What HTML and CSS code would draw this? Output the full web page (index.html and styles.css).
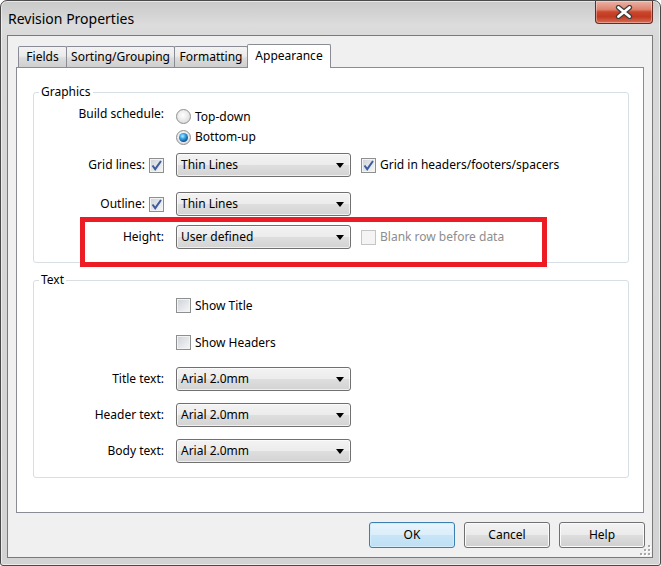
FILE: index.html
```html
<!DOCTYPE html>
<html lang="en">
<head>
<meta charset="utf-8">
<title>Revision Properties</title>
<link rel="stylesheet" href="styles.css">
</head>
<body>
<div class="window">
  <div class="titlebar">
    <span class="title">Revision Properties</span>
    <div class="close">
      <svg width="18" height="14" viewBox="0 0 18 14"><path d="M3.5 2.5 L14.5 11.5 M14.5 2.5 L3.5 11.5" stroke="#3d3d3d" stroke-width="5.2" stroke-linecap="round" fill="none"/><path d="M3.5 2.5 L14.5 11.5 M14.5 2.5 L3.5 11.5" stroke="#ffffff" stroke-width="2.8" stroke-linecap="round" fill="none"/></svg>
    </div>
  </div>
  <div class="client">
    <div class="tabs">
      <div class="tab t-fields">Fields</div>
      <div class="tab t-sort">Sorting/Grouping</div>
      <div class="tab t-format">Formatting</div>
      <div class="tab active t-appear">Appearance</div>
    </div>
    <div class="panel">
      <div class="group gfx">
        <span class="legend">Graphics</span>
        <div class="row r-radio1">
          <div class="lbl top">Build schedule:</div>
          <div class="opt"><span class="radio"></span>Top-down</div>
        </div>
        <div class="row r-radio2">
          <div class="lbl"></div>
          <div class="opt"><span class="radio on"></span>Bottom-up</div>
        </div>
        <div class="row r-grid">
          <div class="lbl">Grid lines:<span class="check"><svg width="13" height="13" viewBox="0 0 13 13"><path d="M2.5 6.5 L5.2 10.2 L11 2" fill="none" stroke="#3f5c9f" stroke-width="2"/></svg></span></div>
          <div class="combo">Thin Lines<span class="arrow"></span></div>
          <div class="opt side"><span class="check"><svg width="13" height="13" viewBox="0 0 13 13"><path d="M2.5 6.5 L5.2 10.2 L11 2" fill="none" stroke="#3f5c9f" stroke-width="2"/></svg></span>Grid in headers/footers/spacers</div>
        </div>
        <div class="row r-outline">
          <div class="lbl">Outline:<span class="check"><svg width="13" height="13" viewBox="0 0 13 13"><path d="M2.5 6.5 L5.2 10.2 L11 2" fill="none" stroke="#3f5c9f" stroke-width="2"/></svg></span></div>
          <div class="combo">Thin Lines<span class="arrow"></span></div>
        </div>
        <div class="row r-height">
          <div class="lbl">Height:</div>
          <div class="combo">User defined<span class="arrow"></span></div>
          <div class="opt side disabled"><span class="check dis"></span>Blank row before data</div>
        </div>
      </div>
      <div class="group txt">
        <span class="legend">Text</span>
        <div class="row r-show1">
          <div class="lbl"></div>
          <div class="opt"><span class="check"></span>Show Title</div>
        </div>
        <div class="row r-show2">
          <div class="lbl"></div>
          <div class="opt"><span class="check"></span>Show Headers</div>
        </div>
        <div class="row r-title">
          <div class="lbl">Title text:</div>
          <div class="combo">Arial 2.0mm<span class="arrow"></span></div>
        </div>
        <div class="row r-header">
          <div class="lbl">Header text:</div>
          <div class="combo">Arial 2.0mm<span class="arrow"></span></div>
        </div>
        <div class="row r-body">
          <div class="lbl">Body text:</div>
          <div class="combo">Arial 2.0mm<span class="arrow"></span></div>
        </div>
      </div>
    </div>
    <div class="buttons">
      <div class="btn default">OK</div>
      <div class="btn">Cancel</div>
      <div class="btn">Help</div>
    </div>
    <div class="grip">
      <svg width="12" height="12" viewBox="0 0 12 12">
        <g fill="#ffffff"><rect x="10" y="2" width="2" height="2"/><rect x="10" y="6" width="2" height="2"/><rect x="6" y="6" width="2" height="2"/><rect x="10" y="10" width="2" height="2"/><rect x="6" y="10" width="2" height="2"/><rect x="2" y="10" width="2" height="2"/></g>
        <g fill="#a8a8a8"><rect x="9" y="1" width="2" height="2"/><rect x="9" y="5" width="2" height="2"/><rect x="5" y="5" width="2" height="2"/><rect x="9" y="9" width="2" height="2"/><rect x="5" y="9" width="2" height="2"/><rect x="1" y="9" width="2" height="2"/></g>
      </svg>
    </div>
  </div>
  <div class="annot"></div>
</div>
</body>
</html>
```

FILE: styles.css
```css
* { box-sizing: border-box; }
html, body { margin: 0; padding: 0; background: #ffffff; }
body {
  font-family: "Noto Sans", "DejaVu Sans", sans-serif;
  font-size: 12px;
  line-height: 16px;
  color: #000;
}
.window {
  width: 661px;
  height: 566px;
  border: 1px solid #4a4a4a;
  border-radius: 7px 7px 3px 3px;
  background: linear-gradient(#c9c9c9 0, #dcdcdc 24px, #d8d8d8 40px, #d3d3d3 100%);
  box-shadow: inset 0 0 0 1px rgba(255,255,255,0.55);
  position: relative;
  display: flex;
  flex-direction: column;
}
.titlebar {
  height: 34px;
  display: flex;
  justify-content: space-between;
  align-items: flex-start;
  padding-left: 7px;
}
.title {
  font-size: 14px;
  line-height: 18px;
  margin-top: 9px;
  color: #000;
}
.close {
  width: 58px;
  height: 23px;
  margin-right: 7px;
  border: 1px solid #6b2a21;
  border-top: none;
  border-radius: 0 0 4px 4px;
  background: linear-gradient(#ebb3a6 0, #de8570 38%, #c9462c 50%, #c13a21 72%, #d96f55 100%);
  box-shadow: inset 0 0 0 1px rgba(255,255,255,0.35);
  display: flex;
  align-items: center;
  justify-content: center;
}
.client {
  margin-left: 6px;
  width: 646px;
  height: 523px;
  border: 1px solid #7a7a7a;
  background: #f0f0f0;
  position: relative;
  display: flex;
  flex-direction: column;
}
.tabs {
  display: flex;
  align-items: flex-end;
  height: 23px;
  margin: 8px 8px 0;
  padding-left: 2px;
  position: relative;
  z-index: 1;
}
.tab {
  height: 21px;
  border: 1px solid #898c95;
  border-bottom: none;
  border-radius: 2px 2px 0 0;
  background: linear-gradient(#f3f3f3, #ebebeb 45%, #dcdcdc 55%, #cfcfcf);
  text-align: center;
  line-height: 20px;
  margin-right: -1px;
  flex: none;
}
.t-fields { width: 49px; }
.t-sort { width: 109px; }
.t-format { width: 74px; }
.t-appear { width: 84px; }
.tab.active {
  height: 24px;
  margin-bottom: -1px;
  background: #ffffff;
  line-height: 22px;
}
.panel {
  margin: 0 8px;
  height: 446px;
  border: 1px solid #898c95;
  background: #ffffff;
  padding: 24px 0 0 16px;
}
.group {
  width: 596px;
  border: 1px solid #d5dfe5;
  border-radius: 3px;
  position: relative;
}
.gfx { height: 171px; padding-top: 13px; }
.txt { height: 198px; margin-top: 17px; padding-top: 14px; }
.legend {
  position: absolute;
  top: -9px;
  left: 5px;
  padding: 0 2px;
  background: #ffffff;
  line-height: 16px;
}
.row { display: flex; align-items: center; }
.lbl {
  width: 130px;
  margin-right: 12px;
  display: flex;
  justify-content: flex-end;
  align-items: center;
  gap: 4px;
  flex: none;
}
.lbl.top { align-self: flex-start; }
.r-radio1 { height: 21px; }
.r-radio2 { height: 20px; }
.r-grid { height: 24px; margin-top: 6px; }
.r-outline { height: 24px; margin-top: 15px; }
.r-height { height: 24px; margin-top: 9px; }
.r-show1 { height: 21px; }
.r-show2 { height: 21px; margin-top: 16px; }
.r-title { height: 24px; margin-top: 14px; }
.r-header { height: 24px; margin-top: 12px; }
.r-body { height: 24px; margin-top: 12px; }
.opt { display: flex; align-items: center; gap: 4px; }
.opt.side { margin-left: 10px; }
.opt.disabled { color: #8d8d8d; }
.radio {
  width: 15px;
  height: 15px;
  border-radius: 50%;
  border: 1px solid #8e8f8f;
  background: radial-gradient(circle at 45% 40%, #ffffff 0, #ececec 45%, #cdcdcd 100%);
  position: relative;
  flex: none;
}
.radio.on::after {
  content: "";
  position: absolute;
  left: 2px;
  top: 2px;
  width: 9px;
  height: 9px;
  border-radius: 50%;
  background: radial-gradient(circle at 40% 35%, #b5f0ff 0, #3aa9ea 32%, #11579c 68%, #0b2c5a 100%);
}
.check {
  width: 15px;
  height: 15px;
  border: 1px solid #8e8f8f;
  background: linear-gradient(135deg, #cdd2d9, #f7f7f7);
  box-shadow: inset 0 0 0 1px #f3f3f3;
  display: flex;
  align-items: center;
  justify-content: center;
  flex: none;
}
.check.dis {
  border-color: #c5c5c5;
  background: #f4f4f4;
  box-shadow: none;
}
.combo {
  width: 175px;
  height: 24px;
  border: 1px solid #707070;
  border-radius: 3px;
  background: linear-gradient(#f3f3f3 0, #ececec 48%, #dedede 52%, #d3d3d3 100%);
  box-shadow: inset 0 0 0 1px rgba(255,255,255,0.65);
  display: flex;
  align-items: center;
  justify-content: space-between;
  padding: 0 6px 0 4px;
  flex: none;
}
.arrow {
  width: 0;
  height: 0;
  border-left: 4.5px solid transparent;
  border-right: 4.5px solid transparent;
  border-top: 5px solid #000;
}
.buttons {
  display: flex;
  justify-content: flex-end;
  gap: 9px;
  margin-top: 9px;
  padding-right: 7px;
}
.btn {
  width: 86px;
  height: 26px;
  border: 1px solid #707070;
  border-radius: 3px;
  background: linear-gradient(#f2f2f2, #ebebeb 48%, #dddddd 52%, #cfcfcf);
  box-shadow: inset 0 0 0 1px #fbfbfb;
  display: flex;
  align-items: center;
  justify-content: center;
}
.btn.default {
  border-color: #3c7fb1;
  background: linear-gradient(#e8f4fc, #dbeefa 48%, #c8e5f7 52%, #bddff5);
  box-shadow: inset 0 0 0 1px #d2ecfb;
}
.grip {
  position: absolute;
  right: 1px;
  bottom: 1px;
  width: 12px;
  height: 12px;
  line-height: 0;
}
.annot {
  position: absolute;
  left: 79px;
  top: 216px;
  width: 467px;
  height: 50px;
  border: 5px solid #ed1c24;
}
```
